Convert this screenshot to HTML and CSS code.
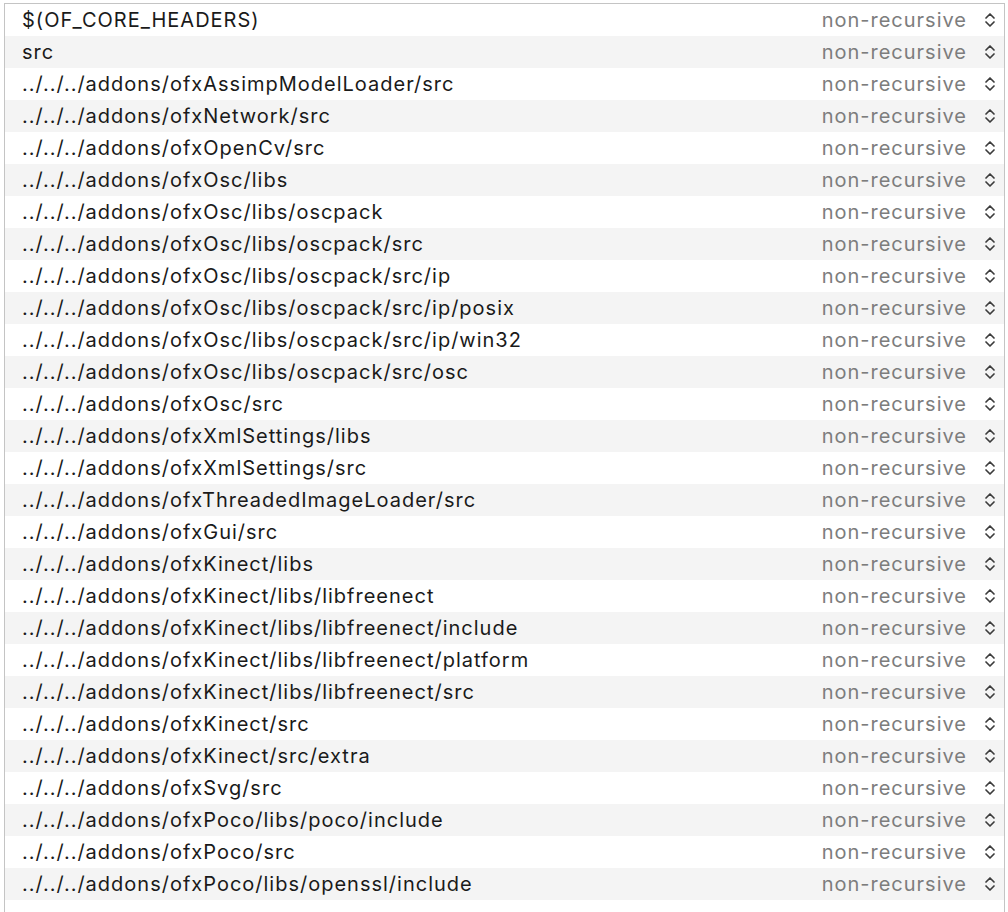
FILE: index.html
```html
<!DOCTYPE html>
<html>
<head>
<meta charset="utf-8">
<link rel="stylesheet" href="styles.css">
</head>
<body>
<div class="panel">
  <ul class="list" id="list"></ul>
</div>
<script>
var paths = [
"$(OF_CORE_HEADERS)","src",
"../../../addons/ofxAssimpModelLoader/src",
"../../../addons/ofxNetwork/src",
"../../../addons/ofxOpenCv/src",
"../../../addons/ofxOsc/libs",
"../../../addons/ofxOsc/libs/oscpack",
"../../../addons/ofxOsc/libs/oscpack/src",
"../../../addons/ofxOsc/libs/oscpack/src/ip",
"../../../addons/ofxOsc/libs/oscpack/src/ip/posix",
"../../../addons/ofxOsc/libs/oscpack/src/ip/win32",
"../../../addons/ofxOsc/libs/oscpack/src/osc",
"../../../addons/ofxOsc/src",
"../../../addons/ofxXmlSettings/libs",
"../../../addons/ofxXmlSettings/src",
"../../../addons/ofxThreadedImageLoader/src",
"../../../addons/ofxGui/src",
"../../../addons/ofxKinect/libs",
"../../../addons/ofxKinect/libs/libfreenect",
"../../../addons/ofxKinect/libs/libfreenect/include",
"../../../addons/ofxKinect/libs/libfreenect/platform",
"../../../addons/ofxKinect/libs/libfreenect/src",
"../../../addons/ofxKinect/src",
"../../../addons/ofxKinect/src/extra",
"../../../addons/ofxSvg/src",
"../../../addons/ofxPoco/libs/poco/include",
"../../../addons/ofxPoco/src",
"../../../addons/ofxPoco/libs/openssl/include"
];
var ul = document.getElementById('list');
paths.forEach(function(p){
  var li = document.createElement('li');
  li.className = 'row';
  var a = document.createElement('span'); a.className='path'; a.textContent = p;
  var b = document.createElement('span'); b.className='mode'; b.textContent = 'non-recursive';
  li.appendChild(a); li.appendChild(b);
  li.insertAdjacentHTML('beforeend','<svg class="stepper" width="12" height="18" viewBox="0 0 12 18"><path d="M2 7 L6 3 L10 7" fill="none" stroke="#3c3c3c" stroke-width="1.7" stroke-linecap="round" stroke-linejoin="round"/><path d="M2 11 L6 15 L10 11" fill="none" stroke="#3c3c3c" stroke-width="1.7" stroke-linecap="round" stroke-linejoin="round"/></svg>');
  ul.appendChild(li);
});
</script>
</body>
</html>
```
FILE: styles.css
```css
html, body {
  margin: 0;
  padding: 0;
  background: #ffffff;
}
body {
  padding: 3px 3px 0 4px;
  height: 912px;
  box-sizing: border-box;
  overflow: hidden;
}
.panel {
  border: 1px solid #c4c4c4;
  border-bottom: none;
  height: 100%;
  box-sizing: border-box;
  background: #fff;
}
.list {
  list-style: none;
  margin: 0;
  padding: 0;
}
.row {
  height: 32px;
  display: flex;
  align-items: center;
  padding: 0 0 0 17px;
  font-family: Inter, "Liberation Sans", Arial, sans-serif;
  font-size: 20px;
  letter-spacing: 1px;
}
.row:nth-child(even) {
  background: #f4f4f4;
}
.path {
  flex: 1;
  color: #1a1a1a;
  white-space: nowrap;
}
.mode {
  color: #7d7d7d;
  margin-right: 17px;
}
.stepper {
  margin-right: 8px;
}
```
